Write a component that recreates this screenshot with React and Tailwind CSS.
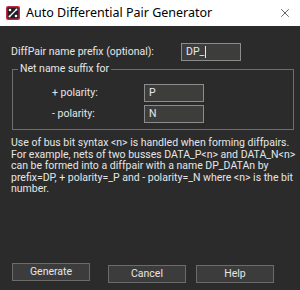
import { X } from "lucide-react";

const font = { fontFamily: 'Roboto, "Noto Sans", sans-serif' };

function AppIcon() {
  return (
    <svg width="14" height="14" viewBox="0 0 14 14">
      <rect x="0" y="0" width="14" height="14" rx="2" fill="#c8283c" />
      <rect x="1.5" y="1.5" width="11" height="11" rx="1" fill="#1e1f2b" />
      <line x1="3.5" y1="10.5" x2="10.5" y2="3.5" stroke="#ffffff" strokeWidth="1.2" />
      <circle cx="4" cy="4" r="1.3" fill="#ffffff" />
      <circle cx="10" cy="10" r="1.3" fill="#ffffff" />
      <circle cx="3.5" cy="10.5" r="1" fill="#ffffff" />
      <circle cx="10.5" cy="3.5" r="1" fill="#ffffff" />
    </svg>
  );
}

function Field({ value, cursor }) {
  return (
    <div className="w-[60px] h-[18px] border border-[#8c8c8c] bg-[#3d3e3c] flex items-center pl-[4px] text-[10.5px] text-[#e4e8ee] leading-none">
      {value}
      {cursor && <span className="w-px h-[12px] bg-[#e4e8ee] ml-[1px]" />}
    </div>
  );
}

function DialogButton({ children }) {
  return (
    <button className="w-[78px] h-[18px] border border-[#6b6b6b] bg-[#3c3c3c] text-[10.5px] text-[#e6e6e6] leading-none">
      {children}
    </button>
  );
}

const helpLines = [
  "Use of bus bit syntax <n> is handled when forming diffpairs.",
  "For example, nets of two busses DATA_P<n> and DATA_N<n>",
  "can be formed into a diffpair with a name DP_DATAn by",
  "prefix=DP, + polarity=_P and - polarity=_N where <n> is the bit",
  "number.",
];

export default function App() {
  return (
    <div
      className="w-[300px] h-[290px] bg-[#2b2b2b] flex flex-col overflow-hidden"
      style={font}
    >
      {/* Title bar */}
      <div className="h-[26px] bg-white flex items-center pl-[6px] pr-[8px] shrink-0">
        <AppIcon />
        <span
          className="ml-[6px] text-[12.5px] text-black leading-none"
          style={{ fontFamily: '"Noto Sans", sans-serif' }}
        >
          Auto Differential Pair Generator
        </span>
        <X className="ml-auto text-[#222]" size={14} strokeWidth={1.2} />
      </div>

      <div className="flex-1 flex flex-col pl-[11px] pr-[6px] pb-[6px]">
        {/* Prefix row */}
        <div className="mt-[17px] h-[18px] flex items-center text-[10.5px] text-[#e6e6e6]">
          <span className="w-[170px]">DiffPair name prefix (optional):</span>
          <Field value="DP_" cursor />
        </div>

        {/* Suffix group */}
        <fieldset className="mt-[1px] ml-px border border-[#6e6e6e] pb-[4px] h-[68px]">
          <legend className="ml-[5px] px-[2px] text-[10.5px] text-[#e6e6e6] leading-[14px]">
            Net name suffix for
          </legend>
          <div className="mt-[8px] flex flex-col gap-[3px]">
            <div className="h-[18px] flex items-center text-[10.5px] text-[#e6e6e6]">
              <span className="w-[131px] pl-[39px]">+ polarity:</span>
              <Field value="P" />
            </div>
            <div className="h-[18px] flex items-center text-[10.5px] text-[#e6e6e6]">
              <span className="w-[131px] pl-[39px]">- polarity:</span>
              <Field value="N" />
            </div>
          </div>
        </fieldset>

        {/* Help text */}
        <div className="mt-[7px] text-[10.5px] leading-[11.6px] text-[#e6e6e6] whitespace-nowrap">
          {helpLines.map((line) => (
            <div key={line}>{line}</div>
          ))}
        </div>

        {/* Buttons */}
        <div className="mt-auto flex items-center pl-px">
          <DialogButton>Generate</DialogButton>
          <div className="ml-[18px]">
            <DialogButton>Cancel</DialogButton>
          </div>
          <div className="ml-[10px]">
            <DialogButton>Help</DialogButton>
          </div>
        </div>
      </div>
    </div>
  );
}
